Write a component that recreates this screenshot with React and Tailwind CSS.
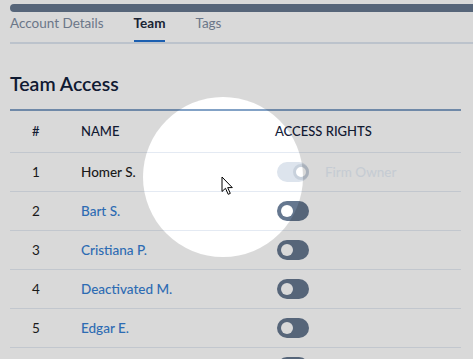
import React from "react";

const members = [
  { id: 1, name: "Homer S.", owner: true },
  { id: 2, name: "Bart S." },
  { id: 3, name: "Cristiana P." },
  { id: 4, name: "Deactivated M." },
  { id: 5, name: "Edgar E." },
  { id: 6, name: "" },
];

function Toggle({ disabled }) {
  if (disabled) {
    return (
      <div className="ml-[2px] w-[32px] h-[20px] rounded-full bg-[#dde4ed] flex items-center justify-end">
        <div className="w-[16px] h-[16px] rounded-full bg-white border-[3px] border-[#c8d1dc]" />
      </div>
    );
  }
  return (
    <div className="ml-[2px] w-[32px] h-[20px] rounded-full bg-[#65778f] flex items-center pl-[4px]">
      <div className="w-[12px] h-[12px] rounded-full bg-white" />
    </div>
  );
}

export default function App() {
  return (
    <div
      className="relative min-h-screen w-full bg-white overflow-hidden"
      style={{ fontFamily: "Lato, 'Noto Sans', sans-serif" }}
    >
      <div className="ml-[10px] mt-[4px] h-[8px] bg-[#65778f] rounded-l-full" />

      <div className="ml-[10px] flex gap-[30px] border-b-2 border-[#dde5f0] text-[13.5px]">
        <div className="pt-[1px] pb-[7px] leading-5 border-b-2 border-transparent text-[#7e8ca1]">
          Account Details
        </div>
        <div className="pt-[1px] pb-[7px] leading-5 border-b-2 border-[#2270cf] font-bold text-[#212a3c]">
          Team
        </div>
        <div className="pt-[1px] pb-[7px] leading-5 border-b-2 border-transparent text-[#7e8ca1]">
          Tags
        </div>
      </div>

      <div className="ml-[10px] mr-[12px]">
        <h2 className="mt-[28px] h-[37px] text-[19.5px] leading-6 font-semibold text-[#12203a]">
          Team Access
        </h2>
        <div className="h-[2px] bg-[#83a2c6]" />

        <div className="grid grid-cols-[71px_194px_1fr] items-center h-[42px] border-b border-[#e4eaf3] text-[13px] font-medium text-[#14213a]">
          <div className="pl-[22px]">#</div>
          <div>NAME</div>
          <div>ACCESS RIGHTS</div>
        </div>

        {members.map((m) => (
          <div
            key={m.id}
            className="grid grid-cols-[71px_194px_1fr] items-center h-[39px] border-b border-[#e4eaf3] text-[13.5px]"
          >
            <div className="pl-[22px] text-[#1e1e1e]">{m.name ? m.id : ""}</div>
            <div className={m.owner ? "font-medium text-[#1e1e1e]" : "font-medium text-[#357ed3]"}>
              {m.name}
            </div>
            <div className="flex items-center gap-[16px]">
              <Toggle disabled={m.owner} />
              {m.owner && <span className="text-[#e8eff8]">Firm Owner</span>}
            </div>
          </div>
        ))}
      </div>

      <div className="absolute left-[143px] top-[97px] w-[160px] h-[160px] rounded-full shadow-[0_0_0_2000px_rgba(0,0,0,0.15)] pointer-events-none" />

      <svg
        className="absolute left-[221px] top-[176px] pointer-events-none"
        width="14"
        height="20"
        viewBox="0 0 14 20"
      >
        <path
          d="M1 1 L1 15.5 L4.5 12.3 L7.2 18.3 L9.3 17.4 L6.7 11.6 L11.3 11.6 Z"
          fill="white"
          stroke="black"
          strokeWidth="1"
          strokeLinejoin="round"
        />
      </svg>
    </div>
  );
}
